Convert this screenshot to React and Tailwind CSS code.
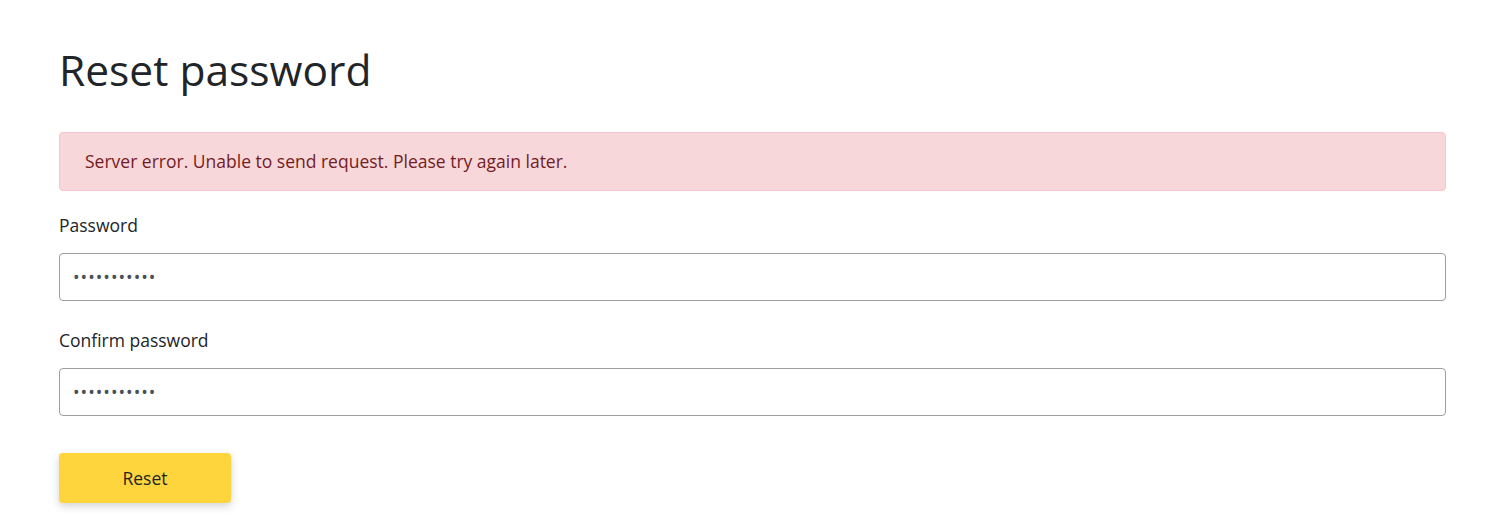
export default function App() {
  return (
    <div className="min-h-screen bg-white text-[#212529] font-['Open_Sans',sans-serif]">
      <div className="pl-[59px] pr-[57px] pt-[42px]">
        <h1 className="text-[42.5px] leading-[56px] font-normal">Reset password</h1>

        <div className="mt-[34px] rounded-[4px] border border-[#f5c6cb] bg-[#f8d7da] px-[25px] pt-[16px] pb-[17px] text-[17.5px] leading-[24px] text-[#721c24]">
          Server error. Unable to send request. Please try again later.
        </div>

        <form className="mt-[22px]" onSubmit={(e) => e.preventDefault()}>
          <div className="mb-[27px]">
            <label className="block text-[17.5px] leading-[24px] mb-[16px]">Password</label>
            <input
              type="password"
              defaultValue="password123"
              className="block w-full h-[48px] rounded-[4px] border border-[#9e9e9e] px-[13px] text-[17.5px] tracking-[1px] text-[#495057] outline-none"
            />
          </div>
          <div className="mb-[37px]">
            <label className="block text-[17.5px] leading-[24px] mb-[16px]">Confirm password</label>
            <input
              type="password"
              defaultValue="password123"
              className="block w-full h-[48px] rounded-[4px] border border-[#9e9e9e] px-[13px] text-[17.5px] tracking-[1px] text-[#495057] outline-none"
            />
          </div>
          <button
            type="submit"
            className="w-[172px] h-[50px] rounded-[4px] bg-[#fed53c] text-[17.5px] text-[#212529] shadow-[0_3px_8px_rgba(0,0,0,0.18)]"
          >
            Reset
          </button>
        </form>
      </div>
    </div>
  );
}
